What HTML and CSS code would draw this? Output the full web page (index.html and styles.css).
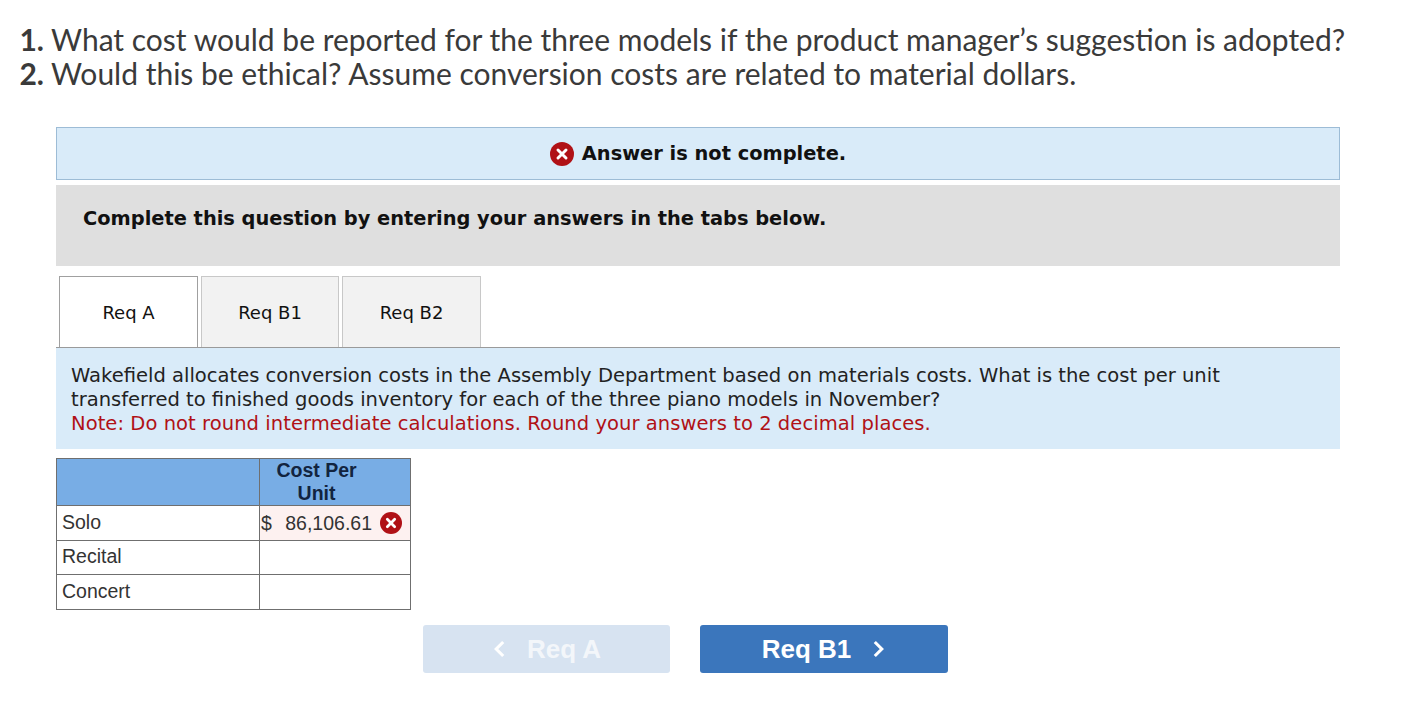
FILE: index.html
```html
<!DOCTYPE html>
<html lang="en">
<head>
  <meta charset="UTF-8" />
  <meta name="viewport" content="width=device-width, initial-scale=1.0" />
  <title>Req A</title>
  <link rel="stylesheet" href="styles.css">
</head>
<body>
  <div class="question">
    <strong class="num">1.</strong>
    <span>What cost would be reported for the three models if the product manager’s suggestion is adopted?</span>
    <strong class="num">2.</strong>
    <span>Would this be ethical? Assume conversion costs are related to material dollars.</span>
  </div>

  <div class="container">
    <div class="alert">
      <svg class="x-icon" viewBox="0 0 24 24"><circle cx="12" cy="12" r="12" fill="#b01116"/><path d="M8 8l8 8M16 8l-8 8" stroke="#fff" stroke-width="3" stroke-linecap="round"/></svg>
      <strong>Answer is not complete.</strong>
    </div>

    <div class="instructions"><strong>Complete this question by entering your answers in the tabs below.</strong></div>

    <div class="tabs">
      <div class="tab active">Req A</div>
      <div class="tab narrow">Req B1</div>
      <div class="tab">Req B2</div>
    </div>

    <div class="panel">
      Wakefield allocates conversion costs in the Assembly Department based on materials costs. What is the cost per unit<br>
      transferred to finished goods inventory for each of the three piano models in November?<br>
      <span class="note">Note: Do not round intermediate calculations. Round your answers to 2 decimal places.</span>
    </div>

    <table class="costs">
      <tr class="head-row">
        <th class="label"></th>
        <th class="value">Cost Per<br>Unit</th>
      </tr>
      <tr class="row-solo">
        <td>Solo</td>
        <td class="wrong">
          <div class="answer">
            <span>$</span>
            <span class="amount">86,106.61</span>
            <svg class="x-icon small" viewBox="0 0 24 24"><circle cx="12" cy="12" r="12" fill="#b01116"/><path d="M8 8l8 8M16 8l-8 8" stroke="#fff" stroke-width="3" stroke-linecap="round"/></svg>
          </div>
        </td>
      </tr>
      <tr class="row-recital">
        <td>Recital</td>
        <td></td>
      </tr>
      <tr class="row-concert">
        <td>Concert</td>
        <td></td>
      </tr>
    </table>

    <div class="actions">
      <a class="btn disabled">
        <svg class="chev" viewBox="0 0 10 14"><path d="M8 2L3 7l5 5" fill="none" stroke="#fff" stroke-width="2.2"/></svg>
        Req A
      </a>
      <a class="btn">
        Req B1
        <svg class="chev" viewBox="0 0 10 14"><path d="M2 2l5 5-5 5" fill="none" stroke="#fff" stroke-width="2.2"/></svg>
      </a>
    </div>
  </div>
</body>
</html>
```

FILE: styles.css
```css
body {
  font-family: "DejaVu Sans", sans-serif;
  background-color: #fff;
  color: #111;
  margin: 0;
  padding: 0;
}
.question {
  display: grid;
  grid-template-columns: 44px auto;
  column-gap: 7px;
  justify-content: start;
  padding-top: 22px;
  padding-bottom: 1px;
  font-family: "Lato", sans-serif;
  font-size: 30px;
  line-height: 34px;
  color: #3a3a3a;
}
.num {
  text-align: right;
}
.container {
  width: 1284px;
  margin-left: 56px;
  margin-top: 36px;
}
.alert {
  display: flex;
  align-items: center;
  justify-content: center;
  gap: 8px;
  height: 51px;
  box-sizing: content-box;
  background-color: #d9ebf9;
  border: 1px solid #9dbcd6;
  font-size: 19.4px;
}
.x-icon {
  width: 24px;
  height: 24px;
}
.x-icon.small {
  width: 22px;
  height: 22px;
  margin-left: 8px;
}
.instructions {
  margin-top: 5px;
  height: 81px;
  padding: 21px 27px 0;
  box-sizing: border-box;
  background-color: #dfdfdf;
  font-size: 19.4px;
  line-height: 26px;
}
.tabs {
  display: flex;
  gap: 3px;
  margin-top: 10px;
  padding-left: 3px;
}
.tab {
  width: 139px;
  height: 71px;
  box-sizing: border-box;
  padding-top: 25px;
  text-align: center;
  font-size: 18px;
  line-height: 22px;
  background-color: #f2f2f2;
  border: 1px solid #c8c8c8;
  border-bottom: 0;
}
.tab.narrow {
  width: 138px;
}
.tab.active {
  background-color: #fff;
  border-color: #a0a0a0;
}
.panel {
  height: 102px;
  box-sizing: border-box;
  padding: 16px 15px 0;
  background-color: #d9ebf9;
  border-top: 1px solid #9a9a9a;
  font-size: 19.55px;
  line-height: 24px;
  color: #222;
}
.note {
  color: #b01116;
  letter-spacing: 0.05px;
}
.costs {
  margin-top: 9px;
  border-collapse: collapse;
  font-family: "Liberation Sans", sans-serif;
  font-size: 19.5px;
  color: #333;
  table-layout: fixed;
  width: 355px;
}
.costs th,
.costs td {
  border: 1px solid #6f6f6f;
  padding: 0 5px 2px;
}
.costs th {
  background-color: #78ade5;
  color: #12243f;
  font-size: 19.5px;
  line-height: 23px;
  padding: 0;
}
.costs th.value {
  padding-right: 37px;
}
.label {
  width: 202px;
}
.head-row { height: 47px; }
.row-solo { height: 35px; }
.row-recital { height: 34px; }
.row-concert { height: 35px; }
.costs td.wrong {
  background-color: #fdf1f0;
  padding: 0 8px 0 1px;
}
.answer {
  display: flex;
  align-items: center;
}
.amount {
  margin-left: auto;
}
.actions {
  display: flex;
  gap: 30px;
  margin-top: 15px;
  padding-left: 367px;
}
.btn {
  display: flex;
  align-items: center;
  justify-content: center;
  gap: 21px;
  width: 248px;
  height: 48px;
  border-radius: 3px;
  background-color: #3b76bc;
  color: #fff;
  font-family: "Liberation Sans", sans-serif;
  font-weight: bold;
  font-size: 26px;
}
.btn.disabled {
  width: 247px;
  background-color: #d7e3f1;
  color: #f3f6fa;
}
.chev {
  width: 14px;
  height: 20px;
}
```
